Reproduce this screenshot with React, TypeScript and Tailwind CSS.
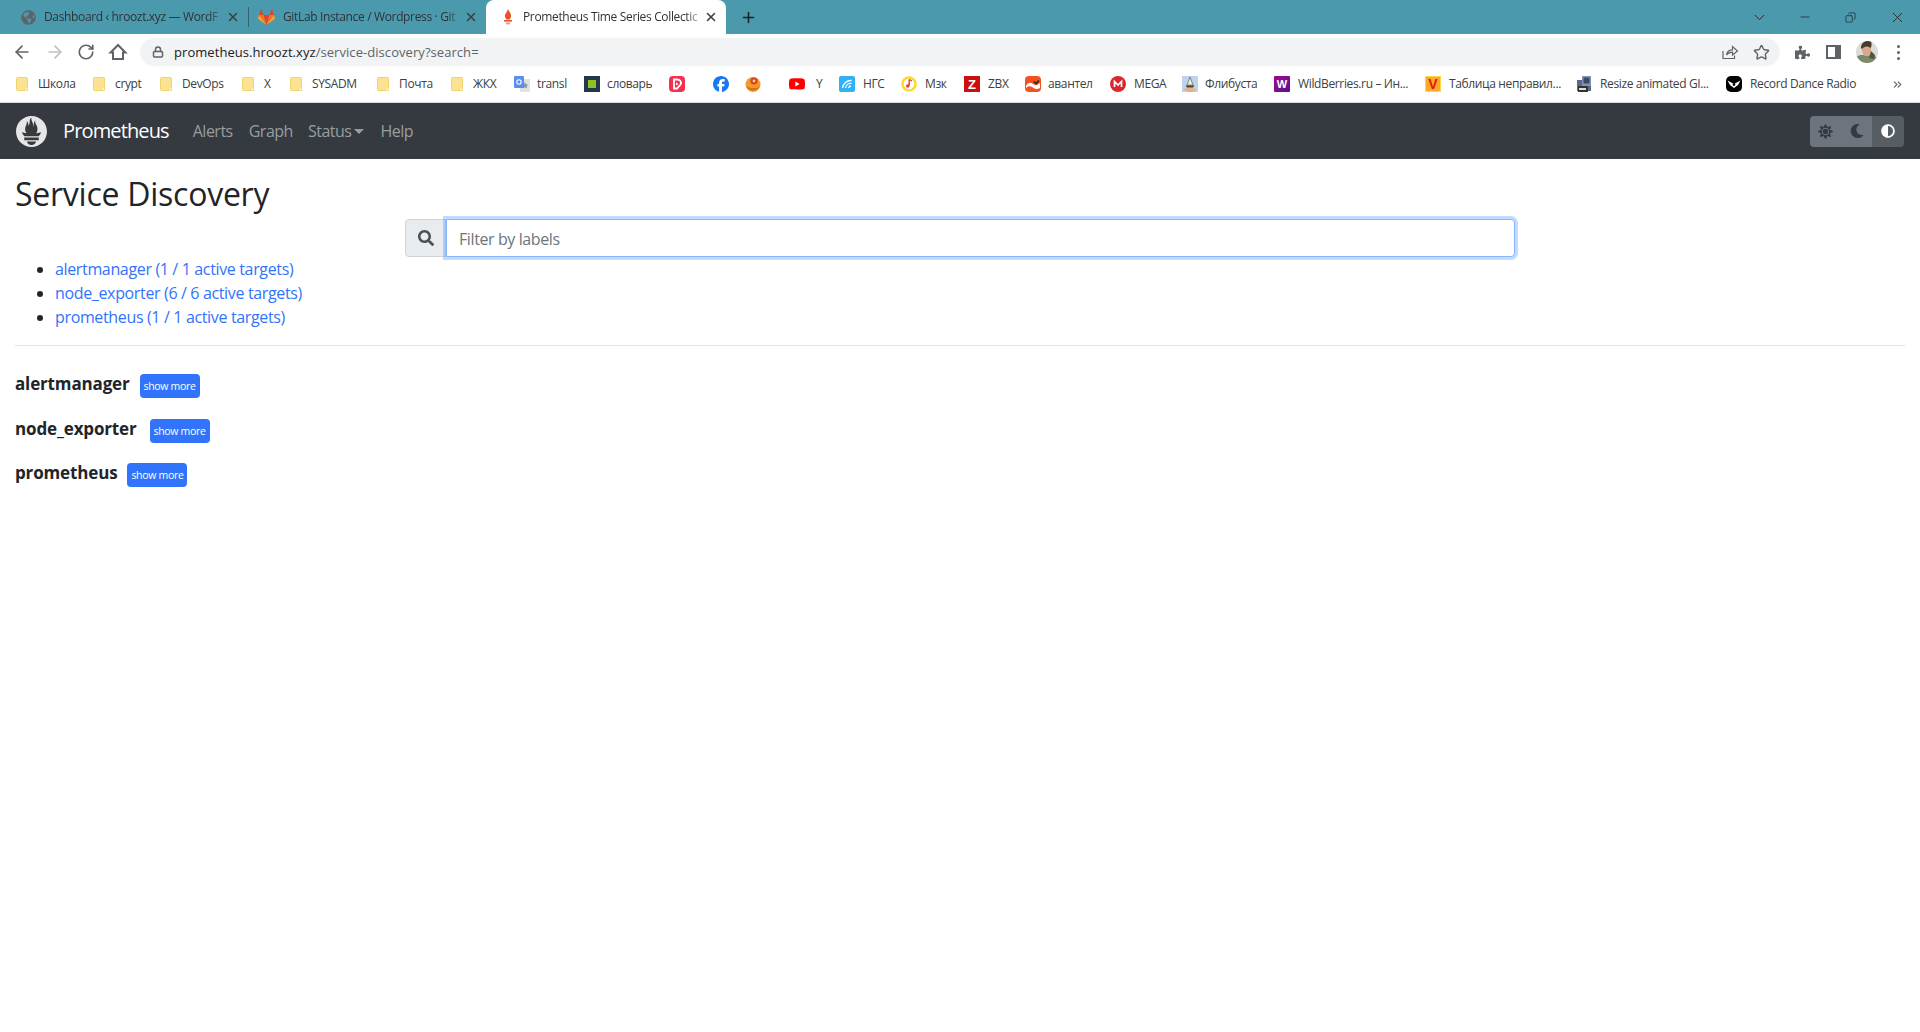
import React from "react";
import { FaSun, FaMoon, FaAdjust, FaSearch, FaPuzzlePiece, FaGlobeAmericas } from "react-icons/fa";
import { SiPrometheus, SiFacebook, SiYoutube } from "react-icons/si";
import { ArrowLeft, ArrowRight, RotateCw, Lock, Star, X, Plus, ChevronDown, Minus, Copy, ChevronsRight } from "lucide-react";

const Folder = () => (
  <svg width="16" height="16" viewBox="0 0 16 16" className="shrink-0">
    <rect x="0.5" y="1.5" width="11" height="13" rx="1" fill="#fde293" stroke="#f2d26b" />
    <rect x="9" y="11" width="2.5" height="3.5" fill="#fff3c4" stroke="#f2d26b" strokeWidth="0.6" />
  </svg>
);

const Tile = ({ cls, children }: { cls: string; children?: React.ReactNode }) => (
  <div className={`w-4 h-4 shrink-0 flex items-center justify-center font-bold leading-none overflow-hidden ${cls}`}>{children}</div>
);

const Translate = () => (
  <svg width="16" height="16" viewBox="0 0 16 16" className="shrink-0">
    <rect x="6" y="3" width="10" height="13" fill="#dfe3e8" />
    <path d="M11 6 l1 2.4 2.4 .2 -1.8 1.6 .6 2.4 -2.2 -1.3 -2.2 1.3 .6 -2.4 -1.8 -1.6 2.4 -.2 z" fill="#8a929c" />
    <rect x="0" y="0" width="10" height="12" rx="1" fill="#5c8df0" />
    <circle cx="5" cy="6" r="2.2" fill="none" stroke="#fff" strokeWidth="1.1" />
  </svg>
);

const Slovar = () => (
  <Tile cls="bg-[#23384d]"><div className="w-2 h-2 bg-[#8fc31f]" /></Tile>
);

const Rutube = () => (
  <Tile cls="bg-[#f5304e] rounded-[4px]">
    <svg width="12" height="12" viewBox="0 0 12 12"><path d="M3 1.5 H6 C9 1.5 11 4 9.5 6.5 L6 10.5 H3 Z" fill="none" stroke="#fff" strokeWidth="1.8" /><path d="M5 4.4 L7.4 6 L5 7.6 Z" fill="#fff" /></svg>
  </Tile>
);

const Orange = () => (
  <svg width="16" height="16" viewBox="0 0 16 16" className="shrink-0">
    <circle cx="8" cy="8.5" r="7.5" fill="#f39a2e" />
    <path d="M1 10 C4 16 12 16 15 10 C12 13 6 13 1 10" fill="#d96e16" />
    <ellipse cx="9" cy="5" rx="3.6" ry="3.4" fill="#d8421c" />
    <circle cx="9" cy="5" r="1.4" fill="#f9d28a" />
  </svg>
);

const Ngs = () => (
  <Tile cls="bg-[#2fb2f5] rounded-[2px]">
    <svg width="12" height="12" viewBox="0 0 12 12" fill="none" stroke="#fff" strokeWidth="1.3"><path d="M1.5 10 A8.5 8.5 0 0 1 10.5 2.5" /><path d="M4.5 10 A5.5 5.5 0 0 1 10.5 5.5" /><path d="M7.5 10 A2.6 2.6 0 0 1 10 8" /></svg>
  </Tile>
);

const Music = () => (
  <svg width="16" height="16" viewBox="0 0 16 16" className="shrink-0">
    <circle cx="8" cy="8" r="6.5" fill="none" stroke="#fdd835" strokeWidth="2.6" />
    <path d="M8.2 3.5 V9.5" stroke="#e53935" strokeWidth="1.4" />
    <path d="M8.2 3.5 L11 5" stroke="#e53935" strokeWidth="1.4" />
    <circle cx="6.8" cy="10" r="1.8" fill="#e53935" />
  </svg>
);

const Avantel = () => (
  <Tile cls="bg-[#f4511e] rounded-[4px]">
    <svg width="16" height="16" viewBox="0 0 16 16"><path d="M1 10 C3 6 6 6 8 8 C10 10 13 9 15 7 V12 C12 14 10 13 7 11 C5 10 3 10 1 12 Z" fill="#fff" /><path d="M9 5 l2 1.4 L13.4 4 l1 1 -3 3.4 -3-2.2z" fill="#222" /></svg>
  </Tile>
);

const Mega = () => (
  <Tile cls="bg-[#d9272e] rounded-full">
    <svg width="10" height="10" viewBox="0 0 10 10" fill="none" stroke="#fff" strokeWidth="1.7"><path d="M1.5 8 V2.5 L5 6 L8.5 2.5 V8" /></svg>
  </Tile>
);

const Flibusta = () => (
  <svg width="16" height="16" viewBox="0 0 16 16" className="shrink-0">
    <rect x="0" y="0" width="16" height="16" fill="#bcd4ee" />
    <path d="M8 1 L11 9 H5 Z" fill="#f2f0e2" stroke="#5c5c50" strokeWidth="0.7" />
    <path d="M3.5 9.5 H12.5 L11 11.5 H5 Z" fill="#4a3c2c" />
    <path d="M1 13 C5 11.5 11 11.5 15 13.5 L11 16 H5 Z" fill="#e8b088" />
  </svg>
);

const Wb = () => (
  <Tile cls="bg-gradient-to-br from-[#a3008f] to-[#5b0a8c] rounded-[1px] text-white text-[11px] font-['Liberation_Sans',sans-serif]">W</Tile>
);

const Tablica = () => (
  <Tile cls="bg-[#ffa726] border border-[#ffd54f] text-[#d81e05] text-[14px] font-['Liberation_Sans',sans-serif]">V</Tile>
);

const Resize = () => (
  <svg width="16" height="16" viewBox="0 0 16 16" className="shrink-0">
    <rect x="1" y="4" width="14" height="11" fill="#5a6b80" />
    <rect x="6" y="0" width="9" height="10" fill="#7f95b5" />
    <rect x="7.5" y="1.5" width="6" height="6" fill="#3b4b66" />
    <rect x="2" y="10" width="10" height="6" fill="#333" />
    <rect x="3" y="12" width="7" height="2" fill="#ddd" />
  </svg>
);

const Record = () => (
  <Tile cls="bg-black rounded-[5px]">
    <svg width="14" height="10" viewBox="0 0 14 10"><path d="M0.5 1.5 L7 5 L13.5 1.5 L11 6 L7 9 L3 6 Z" fill="#fff" /><circle cx="7" cy="5.6" r="1.3" fill="#000" /></svg>
  </Tile>
);

const GitlabColor = () => (
  <svg width="17" height="17" viewBox="0 0 24 24" className="shrink-0">
    <path d="M12 22.5 L16.4 8.6 H7.6 Z" fill="#e24329" />
    <path d="M12 22.5 L7.6 8.6 H1.4 Z" fill="#fc6d26" />
    <path d="M12 22.5 L16.4 8.6 H22.6 Z" fill="#fc6d26" />
    <path d="M1.4 8.6 L0.2 12.7 C0 13.2 .2 13.7 .6 14 L12 22.5 Z" fill="#fca326" />
    <path d="M22.6 8.6 L23.8 12.7 C24 13.2 23.8 13.7 23.4 14 L12 22.5 Z" fill="#fca326" />
    <path d="M1.4 8.6 H7.6 L5 .7 C4.8 .2 4.2 .2 4 .7 Z" fill="#e24329" />
    <path d="M22.6 8.6 H16.4 L19 .7 C19.2 .2 19.8 .2 20 .7 Z" fill="#e24329" />
  </svg>
);

const Flame = () => (
  <svg width="14" height="16" viewBox="0 0 14 16" className="shrink-0">
    <path d="M7 0 C7.6 2 9.5 3.5 10 6 C10.3 8 9.5 9.5 8.5 10.5 H5.5 C4.5 9.5 3.7 8 4 6 C4.3 4.5 6.5 2.5 7 0 Z" fill="#e6522c" />
    <rect x="3" y="11" width="8" height="1.6" fill="#e6522c" />
    <path d="M4.5 13.4 H9.5 C9.5 15 8 15.5 7 15.5 C6 15.5 4.5 15 4.5 13.4 Z" fill="#f2987e" />
  </svg>
);

const HomeIcon = () => (
  <svg width="20" height="20" viewBox="0 0 20 20" fill="none" stroke="#5f6368" strokeWidth="2" strokeLinejoin="miter">
    <path d="M10 3 L2.6 10.5 H5 V17 H15 V10.5 H17.4 Z" />
  </svg>
);

const ShareIcon = () => (
  <svg width="18" height="18" viewBox="0 0 18 18" fill="none" stroke="#5f6368" strokeWidth="1.2">
    <path d="M2 8 V15.5 H13.5 V12.5" />
    <path d="M5.5 12 C6 8.5 8.5 6.8 11.5 6.8 V3.5 L16.5 8 L11.5 12 V9.2 C9.5 9.2 7 10 5.5 12 Z" />
  </svg>
);

const Avatar = () => (
  <svg width="22" height="22" viewBox="0 0 22 22" className="ml-[15px] shrink-0">
    <defs><clipPath id="av"><circle cx="11" cy="11" r="11" /></clipPath></defs>
    <g clipPath="url(#av)">
      <rect width="22" height="22" fill="#d9dcd8" />
      <path d="M0 22 V16 C4 13 8 14 11 15 C15 13 19 14 22 18 V22 Z" fill="#7d8a6a" />
      <ellipse cx="10.5" cy="9" rx="4.6" ry="6" fill="#d8a98c" />
      <path d="M5 7 C5 2 9 -1 15 0 C16 3 15.5 6 14.5 7 C12 4.5 8 5 6 8 Z" fill="#4a3a2a" />
      <path d="M15 10 L19 14 L18 18 L13 17 Z" fill="#55523f" />
    </g>
  </svg>
);

type Bm = { icon: React.ReactNode; label?: string; cls: string; lbl?: string };

const bookmarks: Bm[] = [
  { icon: <Folder />, label: "Школа", cls: "w-[77px]", lbl: "ml-[6px]" },
  { icon: <Folder />, label: "crypt", cls: "w-[67px]", lbl: "ml-[6px]" },
  { icon: <Folder />, label: "DevOps", cls: "w-[82px]", lbl: "ml-[6px]" },
  { icon: <Folder />, label: "X", cls: "w-[48px]", lbl: "ml-[6px]" },
  { icon: <Folder />, label: "SYSADM", cls: "w-[87px]", lbl: "ml-[6px]" },
  { icon: <Folder />, label: "Почта", cls: "w-[74px]", lbl: "ml-[6px]" },
  { icon: <Folder />, label: "ЖКХ", cls: "w-[63px]", lbl: "ml-[6px]" },
  { icon: <Translate />, label: "transl", cls: "w-[70px]", lbl: "ml-[7px]" },
  { icon: <Slovar />, label: "словарь", cls: "w-[85px]", lbl: "ml-[7px]" },
  { icon: <Rutube />, cls: "w-[44px]" },
  { icon: <SiFacebook size={16} className="text-[#1877f2] shrink-0" />, cls: "w-[32px]" },
  { icon: <Orange />, cls: "w-[44px]" },
  { icon: <SiYoutube size={16} className="text-[#f00] shrink-0" />, label: "Y", cls: "w-[50px]", lbl: "ml-[11px]" },
  { icon: <Ngs />, label: "НГС", cls: "w-[62px]", lbl: "ml-[8px]" },
  { icon: <Music />, label: "Мзк", cls: "w-[63px]", lbl: "ml-[8px]" },
  { icon: <Tile cls="bg-[#cc0f0f] text-white text-[13px] font-['Liberation_Sans',sans-serif]">Z</Tile>, label: "ZBX", cls: "w-[61px]", lbl: "ml-[8px]" },
  { icon: <Avantel />, label: "авантел", cls: "w-[85px]", lbl: "ml-[7px]" },
  { icon: <Mega />, label: "MEGA", cls: "w-[72px]", lbl: "ml-[8px]" },
  { icon: <Flibusta />, label: "Флибуста", cls: "w-[92px]", lbl: "ml-[7px]" },
  { icon: <Wb />, label: "WildBerries.ru – Ин...", cls: "w-[151px]", lbl: "ml-[8px]" },
  { icon: <Tablica />, label: "Таблица неправил...", cls: "w-[151px]", lbl: "ml-[8px]" },
  { icon: <Resize />, label: "Resize animated GI...", cls: "w-[150px]", lbl: "ml-[8px]" },
  { icon: <Record />, label: "Record Dance Radio", cls: "w-[150px]", lbl: "ml-[8px]" },
];

const ui = "font-['Open_Sans','Noto_Sans',sans-serif]";

function Tab({ icon, title, active, cls }: { icon: React.ReactNode; title: string; active?: boolean; cls: string }) {
  return (
    <div className={`relative flex items-center h-[34px] shrink-0 pl-[15px] pr-[8px] ${cls} ${active ? "bg-white rounded-t-[8px]" : ""}`}>
      {icon}
      <span className="ml-[8px] flex-1 whitespace-nowrap text-[12px] tracking-[-0.35px] text-[#2f3336]" style={{ maskImage: "linear-gradient(to right, black 90%, transparent)" }}>{title}</span>
      <X size={14} strokeWidth={2.6} className="text-[#3c4043] shrink-0" />
    </div>
  );
}

function Section({ name, cls, btn }: { name: string; cls: string; btn: string }) {
  return (
    <div className={`flex items-start ${cls}`}>
      <h3 className="text-[17px] leading-[20px] font-bold tracking-[-0.15px] text-[#212529]">{name}</h3>
      <button className={`${btn} h-[24px] w-[60px] rounded-[4px] bg-[#3273fb] text-white text-[10.5px] tracking-[-0.3px] leading-none`}>show more</button>
    </div>
  );
}

export default function App() {
  return (
    <div className={`min-h-screen bg-white ${ui}`}>
      {/* tab strip */}
      <div className="h-[34px] bg-[#4a99ad] flex items-center">
        <div className="w-[6px] shrink-0" />
        <Tab cls="w-[242px]" title="Dashboard ‹ hroozt.xyz — WordF" icon={<FaGlobeAmericas size={15} className="text-[#5f6368] shrink-0" />} />
        <div className="w-px h-[20px] bg-[#35606c] shrink-0" />
        <Tab cls="w-[237px] !pl-[9px]" title="GitLab Instance / Wordpress · Git" icon={<GitlabColor />} />
        <Tab active cls="w-[240px]" title="Prometheus Time Series Collectic" icon={<Flame />} />
        <Plus size={17} strokeWidth={2.2} className="ml-[14px] text-[#202124]" />
        <div className="flex-1" />
        <ChevronDown size={17} strokeWidth={1.3} className="text-[#202124]" />
        <Minus size={14} strokeWidth={1.3} className="ml-[30px] text-[#202124]" />
        <Copy size={11} strokeWidth={1.5} className="ml-[33px] text-[#202124] -scale-x-100" />
        <X size={17} strokeWidth={1.2} className="ml-[33px] mr-[14px] text-[#202124]" />
      </div>

      {/* toolbar */}
      <div className="h-[32px] bg-white flex items-end">
        <div className="h-[32px] flex items-center w-[140px] shrink-0 pl-[12px] gap-[12.5px] pt-[4px]">
          <ArrowLeft size={20} strokeWidth={2} className="text-[#5f6368]" />
          <ArrowRight size={20} strokeWidth={2} className="text-[#bdc1c6]" />
          <RotateCw size={18} strokeWidth={2.2} className="text-[#5f6368]" />
          <HomeIcon />
        </div>
        <div className="h-[28px] w-[1640px] shrink-0 rounded-full bg-[#f1f3f4] flex items-center pl-[12px] pr-[10px]">
          <Lock size={12} strokeWidth={3} className="text-[#5f6368]" />
          <span className="ml-[10px] pt-[1px] text-[13px] tracking-[0.06px] text-[#202124]">prometheus.hroozt.xyz<span className="text-[#5f6368]">/service-discovery?search=</span></span>
          <div className="flex-1" />
          <ShareIcon />
          <Star size={17} strokeWidth={2} className="ml-[14px] text-[#5f6368]" />
        </div>
        <div className="flex-1 h-[32px] flex items-center pt-[4px] pl-[15px]">
          <FaPuzzlePiece size={15} className="text-[#5f6368] shrink-0" />
          <div className="ml-[16px] w-[15px] h-[14px] border-[2px] border-[#5f6368] border-r-[6px] shrink-0" />
          <Avatar />
          <div className="ml-[19px] flex flex-col gap-[3px] shrink-0">
            <div className="w-[3px] h-[3px] rounded-full bg-[#5f6368]" />
            <div className="w-[3px] h-[3px] rounded-full bg-[#5f6368]" />
            <div className="w-[3px] h-[3px] rounded-full bg-[#5f6368]" />
          </div>
        </div>
      </div>

      {/* bookmarks */}
      <div className="h-[37px] bg-white border-b border-[#d8dadc] flex items-center pl-[16px]">
        {bookmarks.map((b, i) => (
          <div key={i} className={`flex items-center shrink-0 ${b.cls}`}>
            {b.icon}
            {b.label && <span className={`${b.lbl} text-[12px] tracking-[-0.36px] whitespace-nowrap text-[#3c4043]`}>{b.label}</span>}
          </div>
        ))}
        <div className="flex-1" />
        <ChevronsRight size={13} strokeWidth={2} className="mr-[16px] text-[#5f6368]" />
      </div>

      {/* navbar */}
      <nav className="h-[56px] bg-[#343a40] flex items-center pl-[16px] pr-[16px]">
        <SiPrometheus size={31} className="text-[#e6e6e6]" />
        <span className="ml-[16px] text-[20px] tracking-[-0.87px] text-white">Prometheus</span>
        <div className="ml-[24px] flex items-center text-[16px] tracking-[-0.5px] text-[#9a9da0]">
          <span>Alerts</span>
          <span className="ml-[16px]">Graph</span>
          <span className="ml-[15px]">Status</span>
          <span className="ml-[3px] w-0 h-0 border-x-[5px] border-x-transparent border-t-[5px] border-t-[#9a9da0]" />
          <span className="ml-[16px]">Help</span>
        </div>
        <div className="flex-1" />
        <div className="flex h-[31px] rounded-[4px] overflow-hidden">
          <div className="w-[31px] bg-[#6c757d] flex items-center justify-center text-[#343a40]"><FaSun size={15} /></div>
          <div className="w-[31px] bg-[#6c757d] flex items-center justify-center text-[#343a40]"><FaMoon size={14} /></div>
          <div className="w-[32px] bg-[#565e64] flex items-center justify-center text-white"><FaAdjust size={14} /></div>
        </div>
      </nav>

      {/* page */}
      <main className="px-[15px]">
        <h2 className="pt-[16px] text-[32px] leading-[38px] tracking-[-0.25px] font-medium text-[#212529]">Service Discovery</h2>
        <div className="mt-[6px] ml-[390px] w-[1110px] h-[38px] flex">
          <div className="w-[41px] flex items-center justify-center bg-[#e9ecef] border border-[#ced4da] rounded-l-[4px] text-[#495057]">
            <FaSearch size={16} />
          </div>
          <div className="flex-1 flex items-center pl-[12px] pt-[2px] bg-white border border-[#86b7fe] rounded-r-[4px] shadow-[0_0_0_3px_rgba(13,110,253,0.25)] text-[16px] tracking-[-0.4px] text-[#6c757d]">Filter by labels</div>
        </div>
        <ul className="pl-[40px] list-disc text-[16px] leading-[24px] tracking-[-0.35px] text-[#3273fb] marker:text-[#212529]">
          <li>alertmanager (1 / 1 active targets)</li>
          <li>node_exporter (6 / 6 active targets)</li>
          <li>prometheus (1 / 1 active targets)</li>
        </ul>
        <hr className="mt-[16px] border-t border-[#e3e3e4]" />
        <Section name="alertmanager" cls="mt-[28px]" btn="ml-[10px]" />
        <Section name="node_exporter" cls="mt-[21px]" btn="ml-[13px]" />
        <Section name="prometheus" cls="mt-[20px]" btn="ml-[10px]" />
      </main>
    </div>
  );
}
